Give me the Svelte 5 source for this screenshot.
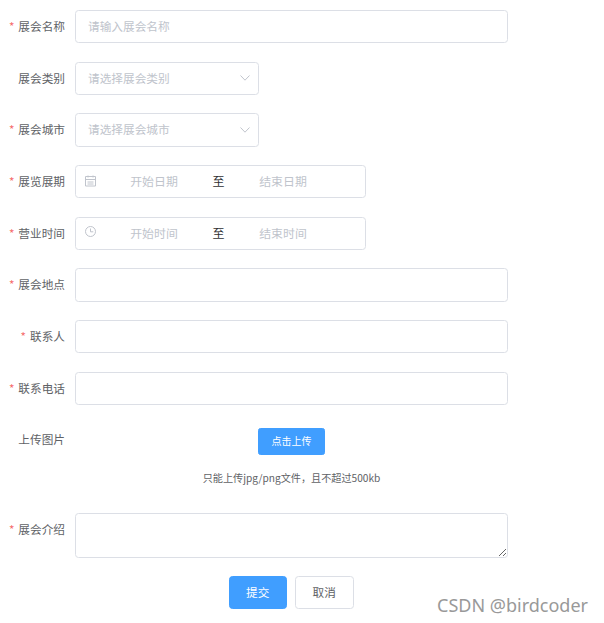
<script>
  const rows = [
    { label: '展会名称', required: true, kind: 'input', placeholder: '请输入展会名称' },
    { label: '展会类别', required: false, kind: 'select', placeholder: '请选择展会类别' },
    { label: '展会城市', required: true, kind: 'select', placeholder: '请选择展会城市' },
    { label: '展览展期', required: true, kind: 'range', icon: 'date', start: '开始日期', end: '结束日期' },
    { label: '营业时间', required: true, kind: 'range', icon: 'time', start: '开始时间', end: '结束时间' },
    { label: '展会地点', required: true, kind: 'input', placeholder: '' },
    { label: '联系人', required: true, kind: 'input', placeholder: '' },
    { label: '联系电话', required: true, kind: 'input', placeholder: '' }
  ];
</script>

<form class="form">
  {#each rows as row}
    <div class="item">
      <span class="label"><span class:req={row.required}>{row.required ? '*' : ''}</span>{row.label}</span>
      {#if row.kind === 'input'}
        <input class="box wide" type="text" placeholder={row.placeholder} />
      {:else if row.kind === 'select'}
        <div class="box select">
          <span class="ph">{row.placeholder}</span>
          <svg width="10" height="6" viewBox="0 0 10 6"><path d="M.5.5 5 5.200 9.500.5" fill="none" stroke="#c0c4cc" stroke-width="1"/></svg>
        </div>
      {:else}
        <div class="box range">
          {#if row.icon === 'date'}
            <svg class="icon" width="12" height="12" viewBox="0 0 12 12" fill="none" stroke="#c0c4cc"><path d="M.5 1.500h10v9.500h-10zM.5 4.500h10M3 .5v2M8 .5v2M2.500 7h6M2.500 9h6"/></svg>
          {:else}
            <svg class="icon" width="12" height="12" viewBox="0 0 12 12" fill="none" stroke="#c0c4cc"><circle cx="5.500" cy="5.500" r="5"/><path d="M5.500 2.500v3.300h2.800"/></svg>
          {/if}
          <span class="ph part">{row.start}</span>
          <span class="sep">至</span>
          <span class="ph part">{row.end}</span>
        </div>
      {/if}
    </div>
  {/each}

  <div class="item upload">
    <span class="label"><span></span>上传图片</span>
    <div class="upload-body">
      <button type="button" class="btn primary small">点击上传</button>
      <div class="tip">只能上传jpg/png文件，且不超过500kb</div>
    </div>
  </div>

  <div class="item intro">
    <span class="label"><span class="req">*</span>展会介绍</span>
    <textarea class="box wide area"></textarea>
  </div>

  <div class="actions">
    <button type="button" class="btn primary">提交</button>
    <button type="button" class="btn">取消</button>
  </div>
</form>

<div class="mark">CSDN @birdcoder</div>

<style>
  :global(body) { margin: 0; background: #fff; }
  .form {
    padding-top: 10px;
    width: 604px;
    height: 613px;
    font-family: "Noto Sans CJK SC", "Noto Sans", sans-serif;
    font-size: 11.67px;
    color: #606266;
  }
  .item { display: flex; align-items: flex-start; height: 33.33px; margin-bottom: 18.33px; }
  .label {
    width: 65px;
    margin-right: 10px;
    line-height: 31.5px;
    text-align: right;
    flex: none;
    white-space: nowrap;
  }
  .req { color: #f56c6c; margin-right: 4px; }
  .box {
    box-sizing: border-box;
    height: 33.33px;
    border: 1px solid #dcdfe6;
    border-radius: 3.5px;
    background: #fff;
    font: inherit;
    outline: none;
  }
  .wide { width: 433px; padding: 0 12px 2px; }
  input::placeholder { color: #c0c4cc; opacity: 1; }
  .ph { color: #c0c4cc; padding-bottom: 2px; }
  .select {
    width: 184px;
    padding: 0 8px 0 12px;
    display: flex;
    align-items: center;
    justify-content: space-between;
  }
  .range {
    width: 291px;
    padding: 0 0 0 9px;
    display: flex;
    align-items: center;
  }
  .icon { flex: none; margin: 0 4px 2px 0; }
  .part { width: 106px; text-align: center; flex: none; font-size: 11.9px; }
  .sep { color: #303133; width: 23px; text-align: center; flex: none; padding-bottom: 2px; font-size: 12px; }
  .upload { height: 71px; margin-bottom: 18.33px; }
  .upload .label { line-height: 31.5px; }
  .upload-body {
    width: 433px;
    display: flex;
    flex-direction: column;
    align-items: center;
    padding-top: 5px;
  }
  .tip { font-size: 10.15px; margin-top: 14px; line-height: 18px; color: #606266; }
  .intro { height: 45px; margin-bottom: 18px; }
  .intro .label { line-height: 31.5px; }
  .area { display: block; height: 45px; resize: vertical; }
  .actions { display: flex; justify-content: center; gap: 8px; width: 583px; margin-left: -0.5px; }
  .btn {
    box-sizing: border-box;
    height: 33.33px;
    width: 58.5px;
    border: 1px solid #dcdfe6;
    border-radius: 3.5px;
    background: #fff;
    color: #606266;
    font: inherit;
    padding: 0 0 2px;
  }
  .primary { background: #409eff; border-color: #409eff; color: #fff; }
  .small { width: 67px; height: 27px; font-size: 10px; border-radius: 2.5px; }
  .mark {
    position: absolute;
    left: 437px;
    top: 592px;
    font-family: "Noto Sans", sans-serif;
    font-size: 18px;
    line-height: 26px;
    color: #999;
    white-space: nowrap;
  }
</style>
